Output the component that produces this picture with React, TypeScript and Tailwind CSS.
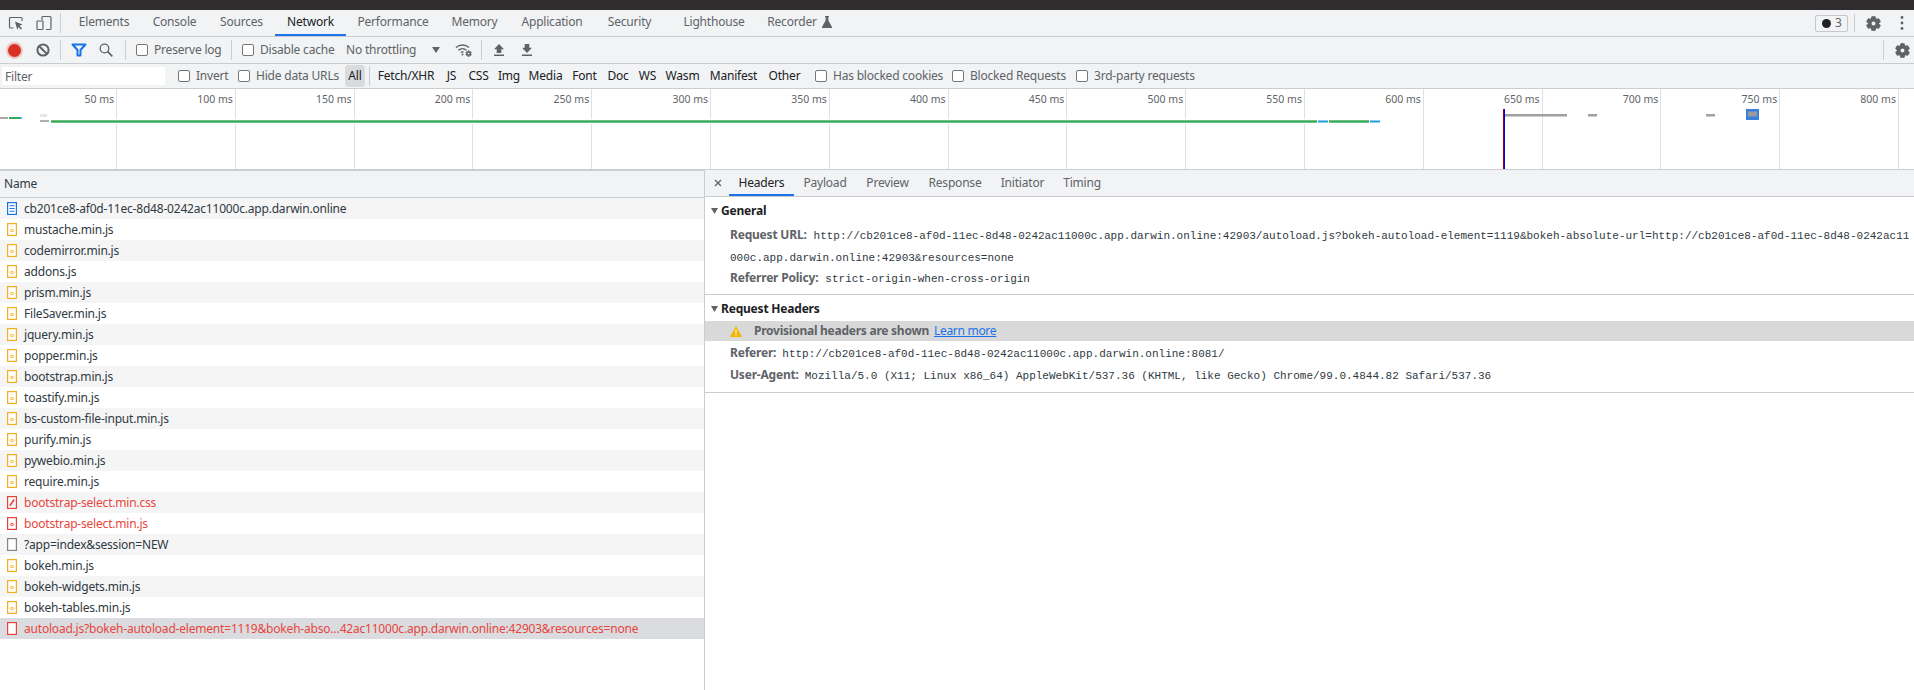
import React from "react";

const GEAR =
  "M19.14 12.94c.04-.3.06-.61.06-.94 0-.32-.02-.64-.07-.94l2.03-1.58c.18-.14.23-.41.12-.61l-1.92-3.32c-.12-.22-.37-.29-.59-.22l-2.39.96c-.5-.38-1.03-.7-1.62-.94l-.36-2.54c-.04-.24-.24-.41-.48-.41h-3.84c-.24 0-.43.17-.47.41l-.36 2.54c-.59.24-1.13.57-1.62.94l-2.39-.96c-.22-.08-.47 0-.59.22L2.74 8.87c-.12.21-.08.47.12.61l2.03 1.58c-.05.3-.09.63-.09.94s.02.64.07.94l-2.03 1.58c-.18.14-.23.41-.12.61l1.92 3.32c.12.22.37.29.59.22l2.39-.96c.5.38 1.03.7 1.62.94l.36 2.54c.05.24.24.41.48.41h3.84c.24 0 .44-.17.47-.41l.36-2.54c.59-.24 1.13-.56 1.62-.94l2.39.96c.22.08.47 0 .59-.22l1.92-3.32c.12-.22.07-.47-.12-.61l-2.01-1.58zM12 15.6c-1.98 0-3.6-1.62-3.6-3.6s1.62-3.6 3.6-3.6 3.6 1.62 3.6 3.6-1.62 3.6-3.6 3.6z";

const Gear = ({ className }: { className: string }) => (
  <svg viewBox="0 0 24 24" className={className} fill="#5f6368" stroke="#5f6368" strokeWidth="1.6">
    <path d={GEAR} fillRule="evenodd" />
  </svg>
);

const Box = () => (
  <span className="w-[12px] h-[12px] shrink-0 rounded-[2px] border border-[#767676] bg-white" />
);

const Sep = ({ className }: { className: string }) => <span className={"w-px h-[20px] bg-[#cacdd1] shrink-0 " + className} />;

const mainTabs = [
  { t: "Elements", c: "w-[74px] ml-[6px]" },
  { t: "Console", c: "w-[67px]" },
  { t: "Sources", c: "w-[67px]" },
  { t: "Network", c: "w-[71px]", active: true },
  { t: "Performance", c: "w-[94px]" },
  { t: "Memory", c: "w-[69px]" },
  { t: "Application", c: "w-[86px]" },
  { t: "Security", c: "w-[69px]" },
  { t: "Lighthouse", c: "w-[84px] ml-[8px]" },
  { t: "Recorder", c: "w-[85px] ml-[1px]", flask: true },
];

const filterTypes = [
  { t: "Fetch/XHR", c: "w-[68px]" },
  { t: "JS", c: "w-[23px]" },
  { t: "CSS", c: "w-[31px]" },
  { t: "Img", c: "w-[30px]" },
  { t: "Media", c: "w-[43px]" },
  { t: "Font", c: "w-[35px]" },
  { t: "Doc", c: "w-[32px]" },
  { t: "WS", c: "w-[27px]" },
  { t: "Wasm", c: "w-[43px]" },
  { t: "Manifest", c: "w-[59px]" },
  { t: "Other", c: "w-[43px]" },
];

const detailTabs = [
  { t: "Headers", c: "w-[65px]", active: true },
  { t: "Payload", c: "w-[62px]" },
  { t: "Preview", c: "w-[63px]" },
  { t: "Response", c: "w-[72px]" },
  { t: "Initiator", c: "w-[63px]" },
  { t: "Timing", c: "w-[56px]" },
];

const rows: { n: string; k: "doc" | "js" | "css" | "none"; red?: boolean }[] = [
  { n: "cb201ce8-af0d-11ec-8d48-0242ac11000c.app.darwin.online", k: "doc" },
  { n: "mustache.min.js", k: "js" },
  { n: "codemirror.min.js", k: "js" },
  { n: "addons.js", k: "js" },
  { n: "prism.min.js", k: "js" },
  { n: "FileSaver.min.js", k: "js" },
  { n: "jquery.min.js", k: "js" },
  { n: "popper.min.js", k: "js" },
  { n: "bootstrap.min.js", k: "js" },
  { n: "toastify.min.js", k: "js" },
  { n: "bs-custom-file-input.min.js", k: "js" },
  { n: "purify.min.js", k: "js" },
  { n: "pywebio.min.js", k: "js" },
  { n: "require.min.js", k: "js" },
  { n: "bootstrap-select.min.css", k: "css", red: true },
  { n: "bootstrap-select.min.js", k: "js", red: true },
  { n: "?app=index&session=NEW", k: "none" },
  { n: "bokeh.min.js", k: "js" },
  { n: "bokeh-widgets.min.js", k: "js" },
  { n: "bokeh-tables.min.js", k: "js" },
  { n: "autoload.js?bokeh-autoload-element=1119&bokeh-abso…42ac11000c.app.darwin.online:42903&resources=none", k: "none", red: true },
];

function FileIcon({ k, red }: { k: string; red?: boolean }) {
  const stroke = red ? "#ea4335" : k === "doc" ? "#1a73e8" : k === "js" ? "#f2b01e" : "#80868b";
  return (
    <svg viewBox="0 0 10 13" className="w-[10px] h-[13px] shrink-0">
      <rect x="0.6" y="0.6" width="8.8" height="11.8" fill="white" stroke={stroke} strokeWidth="1.2" />
      {k === "doc" && <path d="M2.500 3.800h5M2.500 6.500h5M2.500 9.200h5" stroke={stroke} strokeWidth="1.100" />}
      {k === "js" && <ellipse cx="5" cy="7.500" rx="1.700" ry="1" fill="none" stroke={stroke} strokeWidth="0.9" />}
      {k === "css" && <path d="M2.800 9.800L7.200 3.600" stroke={stroke} strokeWidth="1.700" />}
    </svg>
  );
}

const labels = ["50", "100", "150", "200", "250", "300", "350", "400", "450", "500", "550", "600", "650", "700", "750", "800"];

const Check = ({ t, c }: { t: string; c: string }) => (
  <div className={"flex items-center shrink-0 whitespace-nowrap " + c}>
    <Box />
    <span className="ml-[6px]">{t}</span>
  </div>
);

const monoClass = "font-['Liberation_Mono',monospace] text-[11px] leading-none tracking-normal text-[#303942]";

export default function App() {
  return (
    <div className="w-[1914px] h-[690px] overflow-hidden bg-white text-[12px] text-[#303942] flex flex-col font-['Noto_Sans','Liberation_Sans',sans-serif] tracking-[-0.2px]">
      <div className="h-[10px] bg-[#2e2c2d] shrink-0" />

      {/* main tabs */}
      <div className="h-[27px] shrink-0 bg-[#f1f3f4] border-b border-[#cacdd1] flex items-stretch text-[#5f6368]">
        <div className="w-[60px] shrink-0 flex items-center pl-[8px] gap-[12px]">
          <svg viewBox="0 0 16 16" className="w-[16px] h-[16px] shrink-0" fill="none">
            <path d="M5.500 13H2.500a1 1 0 0 1-1-1V3.500a1 1 0 0 1 1-1H13a1 1 0 0 1 1 1V6" stroke="#5f6368" strokeWidth="1.200" />
            <path d="M7 6.500l7.500 3-3 1.200 2.600 2.700-1.200 1.100-2.600-2.600-1 3z" fill="#5f6368" />
          </svg>
          <svg viewBox="0 0 16 16" className="w-[16px] h-[18px] shrink-0" fill="none" stroke="#5f6368" strokeWidth="1.200">
            <path d="M6 5V2.500a1 1 0 0 1 1-1h7a1 1 0 0 1 1 1v11a1 1 0 0 1-1 1h-4" />
            <rect x="1" y="6" width="6" height="8.500" rx="0.800" />
          </svg>
        </div>
        <Sep className="self-center" />
        {mainTabs.map((x) => (
          <div
            key={x.t}
            className={
              "flex items-center justify-center gap-[5px] shrink-0 border-b-2 " +
              x.c +
              (x.active ? " border-[#1a73e8] text-[#202124]" : " border-transparent")
            }
          >
            {x.t}
            {x.flask && (
              <svg viewBox="0 0 10 12" className="w-[10px] h-[12px]" fill="#5f6368">
                <path d="M3 0h4v1H6.400v3.500L10 11v1H0v-1l3.600-6.500V1H3z" />
              </svg>
            )}
          </div>
        ))}
        <div className="flex-1" />
        <div className="self-center flex items-center w-[33px] h-[17px] border border-[#c4c7cc] rounded-[2px] pl-[6px] gap-[4px] text-[#5f6368]">
          <span className="w-[9px] h-[9px] rounded-full bg-[#202124]" />
          <span>3</span>
        </div>
        <Sep className="self-center ml-[6px] !h-[18px]" />
        <Gear className="w-[17px] h-[17px] self-center ml-[10px]" />
        <svg viewBox="0 0 4 16" className="w-[4px] h-[16px] self-center ml-[18px] mr-[10px]" fill="#5f6368">
          <circle cx="2" cy="2.500" r="1.400" />
          <circle cx="2" cy="8" r="1.400" />
          <circle cx="2" cy="13.500" r="1.400" />
        </svg>
      </div>

      {/* toolbar */}
      <div className="h-[27px] shrink-0 bg-[#f1f3f4] border-b border-[#cacdd1] flex items-center text-[#5f6368]">
        <span className="w-[13px] h-[13px] ml-[8px] rounded-full bg-[#d93025] ring-2 ring-[#e8a9a4]/60 shrink-0" />
        <svg viewBox="0 0 14 14" className="w-[14px] h-[14px] ml-[15px] shrink-0" fill="none" stroke="#5f6368" strokeWidth="2">
          <circle cx="7" cy="7" r="5.600" />
          <path d="M3 3l8 8" />
        </svg>
        <Sep className="ml-[10px]" />
        <svg viewBox="0 0 16 14" className="w-[16px] h-[14px] ml-[10px] shrink-0" fill="none" stroke="#1a73e8" strokeWidth="2">
          <path d="M1.500 1.500h13L9.500 7v5.500h-3V7z" strokeLinejoin="round" />
        </svg>
        <svg viewBox="0 0 14 14" className="w-[14px] h-[14px] ml-[12px] shrink-0" fill="none" stroke="#5f6368" strokeWidth="1.300">
          <circle cx="5.500" cy="5.500" r="4.300" />
          <path d="M8.700 8.700L13.300 13.300" strokeWidth="1.700" />
        </svg>
        <Sep className="ml-[12px]" />
        <Check t="Preserve log" c="ml-[10px] w-[95px]" />
        <Sep className="" />
        <Check t="Disable cache" c="ml-[10px] w-[104px]" />
        <span className="w-[86px] shrink-0 whitespace-nowrap">No throttling</span>
        <svg viewBox="0 0 8 6" className="w-[8px] h-[6px] shrink-0" fill="#5f6368">
          <path d="M0 0h8L4 6z" />
        </svg>
        <svg viewBox="0 0 18 14" className="w-[18px] h-[14px] ml-[15px] shrink-0" fill="none" stroke="#5f6368" strokeWidth="1.400">
          <path d="M1 4.500a9.500 9.500 0 0 1 13 0M3.400 7.200a6 6 0 0 1 8 0M5.800 9.600a2.600 2.600 0 0 1 2.800 -.5" />
          <circle cx="7.500" cy="11.500" r="1" fill="#5f6368" stroke="none" />
          <g transform="translate(10 7) scale(0.300)">
            <path d={GEAR} fillRule="evenodd" fill="#5f6368" stroke="#5f6368" strokeWidth="2" />
          </g>
        </svg>
        <Sep className="ml-[8px]" />
        <svg viewBox="0 0 10 12" className="w-[10px] h-[12px] ml-[12px] shrink-0" fill="#5f6368">
          <path d="M5 0l5 5.200H7.300V9H2.700V5.200H0zM0 10.500h10V12H0z" />
        </svg>
        <svg viewBox="0 0 10 12" className="w-[10px] h-[12px] ml-[18px] shrink-0" fill="#5f6368">
          <path d="M2.700 0h4.600v3.800H10L5 9 0 3.800h2.700zM0 10.500h10V12H0z" />
        </svg>
        <div className="flex-1" />
        <Sep className="" />
        <Gear className="w-[17px] h-[17px] ml-[10px] mr-[3px]" />
      </div>

      {/* filter bar */}
      <div className="h-[25px] shrink-0 bg-[#f1f3f4] border-b border-[#cacdd1] flex items-center">
        <div className="w-[163px] h-[18px] ml-[2px] bg-white flex items-center pl-[3px] pt-px text-[#5f6368] shrink-0">Filter</div>
        <Check t="Invert" c="ml-[13px] w-[60px] text-[#5f6368]" />
        <Check t="Hide data URLs" c="w-[107px] text-[#5f6368]" />
        <span className="w-[20px] h-[22px] rounded-[4px] bg-[#d9dadc] flex items-center justify-center text-[#202124] shrink-0">All</span>
        <Sep className="ml-[4px] mr-[2px]" />
        {filterTypes.map((x) => (
          <span key={x.t} className={"text-center shrink-0 whitespace-nowrap text-[#202124] " + x.c}>
            {x.t}
          </span>
        ))}
        <Check t="Has blocked cookies" c="ml-[9px] w-[137px] text-[#5f6368]" />
        <Check t="Blocked Requests" c="w-[124px] text-[#5f6368]" />
        <Check t="3rd-party requests" c="w-[125px] text-[#5f6368]" />
      </div>

      {/* overview */}
      <div className="h-[81px] shrink-0 border-b border-[#cacdd1] relative flex items-stretch text-[10.500px] text-[#5f6368] tracking-normal">
        {labels.map((l, i) => (
          <div
            key={l}
            className={
              "shrink-0 border-r border-[#e0e0e0] text-right pr-[2px] pt-[3px] " +
              (i === 0 ? "w-[117px]" : "w-[118.800px]")
            }
          >
            {l} ms
          </div>
        ))}
        <svg viewBox="0 0 1914 80" className="absolute left-0 top-0 w-[1914px] h-[80px]">
          <rect x="0" y="30" width="1381" height="5" fill="white" />
          <rect x="0" y="28" width="8" height="2" fill="#a8a8a8" />
          <rect x="9" y="28" width="11" height="2" fill="#34a853" />
          <rect x="20" y="28" width="2" height="2" fill="#4fb3ec" />
          <rect x="40" y="25" width="7" height="3" fill="#e6e6e6" />
          <rect x="40" y="31" width="9" height="2" fill="#b0b0b0" />
          <rect x="51" y="31" width="1266" height="3" fill="#a8dcb8" />
          <rect x="51" y="31.500" width="1266" height="2" fill="#34a853" />
          <rect x="1318" y="31" width="10" height="3" fill="#8fd0f4" />
          <rect x="1318" y="32" width="10" height="1" fill="#1e9bdc" />
          <rect x="1329" y="31" width="40" height="3" fill="#a8dcb8" />
          <rect x="1329" y="31.500" width="40" height="2" fill="#34a853" />
          <rect x="1370" y="31" width="10" height="3" fill="#8fd0f4" />
          <rect x="1370" y="32" width="10" height="1" fill="#1e9bdc" />
          <rect x="1503" y="20" width="1" height="60" fill="#a00000" />
          <rect x="1504" y="20" width="1" height="60" fill="#0000e0" />
          <rect x="1505" y="25" width="62" height="2.500" fill="#a0a0a0" />
          <rect x="1588" y="25" width="9" height="2.500" fill="#a0a0a0" />
          <rect x="1706" y="25" width="9" height="2.500" fill="#a0a0a0" />
          <rect x="1746" y="20" width="13" height="11" fill="#3a7fdd" />
          <rect x="1748" y="22.500" width="9" height="5" fill="#9a9a9a" />
        </svg>
      </div>

      {/* split */}
      <div className="flex-1 flex items-stretch min-h-0">
        <div className="w-[705px] shrink-0 border-r border-[#cacdd1] flex flex-col">
          <div className="h-[28px] shrink-0 bg-[#f1f3f4] border-t border-b border-[#cacdd1] flex items-center pl-[4px]">Name</div>
          {rows.map((r, i) => (
            <div
              key={r.n}
              className={
                "h-[21px] shrink-0 flex items-center pl-[7px] gap-[7px] whitespace-nowrap " +
                (i === 20 ? "bg-[#dadce0] " : i % 2 === 0 ? "bg-[#f5f5f5] " : "bg-white ") +
                (r.red ? "text-[#e8453c]" : "text-[#303942]")
              }
            >
              <FileIcon k={r.k} red={r.red} />
              <span>{r.n}</span>
            </div>
          ))}
        </div>

        <div className="flex-1 min-w-0 flex flex-col">
          <div className="h-[27px] shrink-0 bg-[#f1f3f4] border-b border-[#cacdd1] flex items-stretch text-[#5f6368]">
            <span className="w-[24px] shrink-0 flex items-center justify-center pl-[2px]">
              <svg viewBox="0 0 8 8" className="w-[8px] h-[8px]" fill="none" stroke="#5f6368" strokeWidth="1.300">
                <path d="M1 1l6 6M7 1L1 7" />
              </svg>
            </span>
            {detailTabs.map((x) => (
              <div
                key={x.t}
                className={
                  "flex items-center justify-center shrink-0 border-b-2 pt-px " +
                  x.c +
                  (x.active ? " border-[#1a73e8] text-[#202124]" : " border-transparent")
                }
              >
                {x.t}
              </div>
            ))}
          </div>

          <div className="border-b border-[#cacdd1] pt-[6px] h-[98px]">
            <SectionTitle t="General" />
            <div className="pl-[25px] leading-[21.500px] pt-[5px]">
              <div>
                <b className="font-bold text-[#5f6368] mr-[7px]">Request URL:</b>
                <span className={monoClass + " break-all"}>
                  http://cb201ce8-af0d-11ec-8d48-0242ac11000c.app.darwin.online:42903/autoload.js?bokeh-autoload-element=1119&bokeh-absolute-url=http://cb201ce8-af0d-11ec-8d48-0242ac11000c.app.darwin.online:42903&resources=none
                </span>
              </div>
              <div>
                <b className="font-bold text-[#5f6368] mr-[7px]">Referrer Policy:</b>
                <span className={monoClass}>strict-origin-when-cross-origin</span>
              </div>
            </div>
          </div>

          <div className="border-b border-[#cacdd1] pt-[6px] h-[98px]">
            <SectionTitle t="Request Headers" />
            <div className="mt-[4px] h-[20px] bg-[#d9d9d9] flex items-center pl-[25px]">
              <svg viewBox="0 0 12 11" className="w-[12px] h-[11px] shrink-0">
                <path d="M6 0l6 11H0z" fill="#f4b400" />
                <path d="M5.400 3.500h1.200v4H5.400zM5.400 8.300h1.200v1.200H5.400z" fill="#fff" />
              </svg>
              <b className="ml-[12px] font-bold text-[#5f6368] tracking-[-0.25px]">Provisional headers are shown</b>
              <span className="ml-[5px] text-[#1a73e8] underline tracking-[-0.3px]">Learn more</span>
            </div>
            <div className="pl-[25px] leading-[21.500px] pt-[1px]">
              <div>
                <b className="font-bold text-[#5f6368] mr-[6px]">Referer:</b>
                <span className={monoClass}>http://cb201ce8-af0d-11ec-8d48-0242ac11000c.app.darwin.online:8081/</span>
              </div>
              <div>
                <b className="font-bold text-[#5f6368] mr-[6px]">User-Agent:</b>
                <span className={monoClass}>Mozilla/5.0 (X11; Linux x86_64) AppleWebKit/537.36 (KHTML, like Gecko) Chrome/99.0.4844.82 Safari/537.36</span>
              </div>
            </div>
          </div>
        </div>
      </div>
    </div>
  );
}

function SectionTitle({ t }: { t: string }) {
  return (
    <div className="h-[16px] flex items-center pl-[6px] gap-[3px] font-bold text-[#202124]">
      <svg viewBox="0 0 7 6" className="w-[7px] h-[6px] shrink-0" fill="#5f6368">
        <path d="M0 0h7L3.500 6z" />
      </svg>
      {t}
    </div>
  );
}
